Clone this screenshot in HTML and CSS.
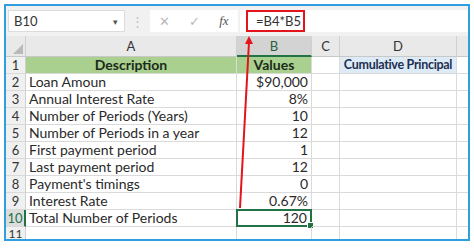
FILE: index.html
```html
<!DOCTYPE html>
<html lang="en">
<head>
    <meta charset="UTF-8">
    <title>Cumulative Principal</title>
    <link rel="stylesheet" href="styles.css">
</head>
<body>
    <div class="frame">
        <div class="formula-bar">
            <div class="name-box">B10<span class="drop">&#9662;</span></div>
            <div class="dots">&#8942;</div>
            <div class="fx-buttons">
                <span class="cancel">&#10005;</span>
                <span class="enter">&#10003;</span>
                <span class="fx">fx</span>
            </div>
            <div class="formula-input">
                <span class="formula">=B4*B5</span>
            </div>
        </div>

        <div class="sheet">
            <div class="corner"><span class="tri"></span></div>
            <div class="col-head">A</div>
            <div class="col-head active">B</div>
            <div class="col-head">C</div>
            <div class="col-head">D</div>
            <div class="col-head rest"></div>

            <div class="row-head">1</div>
            <div class="cell head green">Description</div>
            <div class="cell head green center">Values</div>
            <div class="cell"></div>
            <div class="cell head blue">Cumulative Principal</div>
            <div class="cell rest"></div>

            <div class="row-head">2</div>
            <div class="cell">Loan Amoun</div>
            <div class="cell num">$90,000</div>
            <div class="cell"></div><div class="cell"></div><div class="cell rest"></div>

            <div class="row-head">3</div>
            <div class="cell">Annual Interest Rate</div>
            <div class="cell num">8%</div>
            <div class="cell"></div><div class="cell"></div><div class="cell rest"></div>

            <div class="row-head">4</div>
            <div class="cell">Number of Periods (Years)</div>
            <div class="cell num">10</div>
            <div class="cell"></div><div class="cell"></div><div class="cell rest"></div>

            <div class="row-head">5</div>
            <div class="cell">Number of Periods in a year</div>
            <div class="cell num">12</div>
            <div class="cell"></div><div class="cell"></div><div class="cell rest"></div>

            <div class="row-head">6</div>
            <div class="cell">First payment period</div>
            <div class="cell num">1</div>
            <div class="cell"></div><div class="cell"></div><div class="cell rest"></div>

            <div class="row-head">7</div>
            <div class="cell">Last payment period</div>
            <div class="cell num">12</div>
            <div class="cell"></div><div class="cell"></div><div class="cell rest"></div>

            <div class="row-head">8</div>
            <div class="cell">Payment's timings</div>
            <div class="cell num">0</div>
            <div class="cell"></div><div class="cell"></div><div class="cell rest"></div>

            <div class="row-head">9</div>
            <div class="cell">Interest Rate</div>
            <div class="cell num">0.67%</div>
            <div class="cell"></div><div class="cell"></div><div class="cell rest"></div>

            <div class="row-head active">10</div>
            <div class="cell">Total Number of Periods</div>
            <div class="cell num selected">120<span class="handle"></span></div>
            <div class="cell"></div><div class="cell"></div><div class="cell rest"></div>

            <div class="row-head last">11</div>
            <div class="cell"></div>
            <div class="cell"></div>
            <div class="cell"></div><div class="cell"></div><div class="cell rest"></div>
        </div>
    </div>

    <svg class="arrow" width="474" height="249" viewBox="0 0 474 249">
        <line x1="240" y1="208" x2="249" y2="42" stroke="#e3141b" stroke-width="2"/>
        <polygon points="249,36 245,44 253,44" fill="#e3141b"/>
    </svg>
</body>
</html>
```

FILE: styles.css
```css
body {
    margin: 0;
    font-family: Lato, "Liberation Sans", sans-serif;
    background: #fff;
}
.frame {
    margin: 4px 4px 0 4px;
    height: 237px;
    border: 2px solid #2f9fdf;
    box-sizing: border-box;
    overflow: hidden;
}
.formula-bar {
    display: flex;
    align-items: center;
    height: 30px;
    background: #f1f1f1;
    padding: 0 0 0 2px;
    box-sizing: border-box;
}
.name-box {
    width: 117px;
    height: 22px;
    background: #fff;
    border: 1px solid #dcdcdc;
    box-sizing: border-box;
    display: flex;
    align-items: center;
    justify-content: space-between;
    padding: 0 6px 0 5px;
    font-size: 13px;
    color: #333;
}
.drop {
    font-size: 9px;
    color: #555;
}
.dots {
    width: 25px;
    text-align: center;
    color: #c4c4c4;
    font-size: 13px;
}
.fx-buttons {
    width: 88px;
    height: 22px;
    background: #fff;
    display: flex;
    align-items: center;
    justify-content: space-around;
    color: #b8b8b8;
    font-size: 13px;
}
.fx-buttons .fx {
    font-family: "Liberation Serif", serif;
    font-style: italic;
    color: #555;
    font-size: 13px;
}
.formula-input {
    flex: 1;
    height: 22px;
    margin-left: 2px;
    background: #fff;
    display: flex;
    align-items: center;
    padding-left: 6px;
}
.formula {
    display: inline-block;
    border: 2px solid #e3141b;
    height: 22px;
    box-sizing: border-box;
    width: 59px;
    padding-left: 8px;
    line-height: 18px;
    font-size: 13px;
    color: #333;
}
.sheet {
    display: grid;
    grid-template-columns: 20px 211px 75px 28px 117px 11px;
    grid-template-rows: 21px repeat(10, 17px) 14px;
    font-size: 14px;
    color: #2a2a2a;
}
.corner {
    background: #e9e9e9;
    border-right: 1px solid #d0d0d0;
    border-bottom: 1px solid #c8c8c8;
    position: relative;
}
.tri {
    position: absolute;
    right: 2px;
    bottom: 2px;
    width: 0;
    height: 0;
    border-left: 10px solid transparent;
    border-bottom: 10px solid #b9b9b9;
}
.col-head {
    background: #e9e9e9;
    border-right: 1px solid #d0d0d0;
    border-bottom: 1px solid #c8c8c8;
    text-align: center;
    line-height: 20px;
    font-size: 13px;
    color: #333;
}
.col-head.active {
    background: #d3d3d3;
    color: #2c5e3c;
    border-bottom: 2px solid #217346;
}
.col-head.rest {
    border-right: none;
}
.row-head {
    background: #f0f0f0;
    border-right: 1px solid #d0d0d0;
    border-bottom: 1px solid #dadada;
    text-align: center;
    line-height: 16px;
    font-size: 13px;
    color: #333;
}
.row-head.last {
    line-height: 14px;
    font-size: 12px;
}
.row-head.active {
    background: #dcdcdc;
    color: #217346;
    border-right: 2px solid #217346;
}
.cell {
    border-right: 1px solid #dadada;
    border-bottom: 1px solid #dadada;
    line-height: 16px;
    padding: 0 3px;
    white-space: nowrap;
    overflow: hidden;
    position: relative;
}
.cell.rest {
    border-right: none;
}
.cell.num {
    text-align: right;
}
.cell.head {
    font-weight: bold;
    text-align: center;
    color: #1c2a1a;
}
.cell.green {
    background: #a9d08e;
}
.cell.blue {
    background: #ddebf7;
    color: #1f2f4f;
    font-size: 12.5px;
    letter-spacing: -0.3px;
    padding: 0;
}
.cell.selected {
    border: 2px solid #217346;
    margin: -1px 0 0 -1px;
    line-height: 14px;
    overflow: visible;
}
.handle {
    position: absolute;
    right: -4px;
    bottom: -4px;
    width: 5px;
    height: 5px;
    background: #217346;
    border: 1px solid #fff;
}
.arrow {
    position: absolute;
    left: 0;
    top: 0;
}
```
